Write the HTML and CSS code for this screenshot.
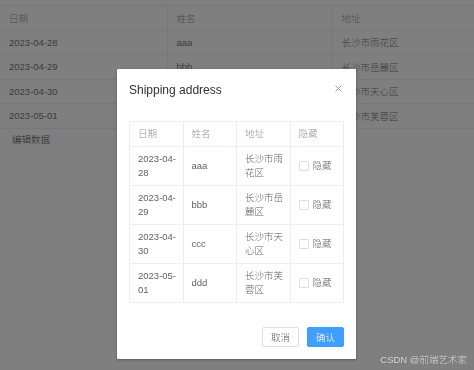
FILE: index.html
```html
<!DOCTYPE html>
<html lang="zh">
<head>
    <meta charset="UTF-8">
    <title>Shipping address</title>
    <link rel="stylesheet" href="styles.css">
</head>
<body>
    <div class="page">
        <table class="list">
            <colgroup>
                <col style="width: 167px">
                <col style="width: 165px">
                <col>
            </colgroup>
            <thead>
                <tr><th>日期</th><th>姓名</th><th>地址</th></tr>
            </thead>
            <tbody>
                <tr><td>2023-04-28</td><td>aaa</td><td>长沙市雨花区</td></tr>
                <tr><td>2023-04-29</td><td>bbb</td><td>长沙市岳麓区</td></tr>
                <tr><td>2023-04-30</td><td>ccc</td><td>长沙市天心区</td></tr>
                <tr><td>2023-05-01</td><td>ddd</td><td>长沙市芙蓉区</td></tr>
            </tbody>
        </table>
        <div class="edit-row">
            <span class="edit-btn">编辑数据</span>
        </div>
    </div>

    <div class="mask">
        <div class="dialog">
            <div class="dialog-header">
                <span class="dialog-title">Shipping address</span>
                <span class="dialog-close">
                    <svg width="7" height="7" viewBox="0 0 7 7">
                        <path d="M0.5 0.5 L6.5 6.5 M6.5 0.5 L0.5 6.5" stroke="#909399" stroke-width="0.9" fill="none"/>
                    </svg>
                </span>
            </div>
            <div class="dialog-body">
                <table class="grid">
                    <thead>
                        <tr><th>日期</th><th>姓名</th><th>地址</th><th>隐藏</th></tr>
                    </thead>
                    <tbody>
                        <tr>
                            <td>2023-04-<br>28</td><td>aaa</td><td>长沙市雨<br>花区</td>
                            <td><label class="check"><span class="box"></span>隐藏</label></td>
                        </tr>
                        <tr>
                            <td>2023-04-<br>29</td><td>bbb</td><td>长沙市岳<br>麓区</td>
                            <td><label class="check"><span class="box"></span>隐藏</label></td>
                        </tr>
                        <tr>
                            <td>2023-04-<br>30</td><td>ccc</td><td>长沙市天<br>心区</td>
                            <td><label class="check"><span class="box"></span>隐藏</label></td>
                        </tr>
                        <tr>
                            <td>2023-05-<br>01</td><td>ddd</td><td>长沙市芙<br>蓉区</td>
                            <td><label class="check"><span class="box"></span>隐藏</label></td>
                        </tr>
                    </tbody>
                </table>
            </div>
            <div class="dialog-footer">
                <button class="btn">取消</button>
                <button class="btn btn-primary">确认</button>
            </div>
        </div>
        <div class="watermark">CSDN @前端艺术家</div>
    </div>
</body>
</html>
```

FILE: styles.css
```css
body {
    margin: 0;
    font-family: "Liberation Sans", "Noto Sans CJK SC", sans-serif;
    font-size: 9.5px;
    font-weight: 300;
    color: #606266;
    background: #fff;
    width: 474px;
    height: 370px;
    overflow: hidden;
}

.page {
    padding-top: 5px;
}

.list {
    width: 100%;
    table-layout: fixed;
    border-collapse: collapse;
}

.list th,
.list td {
    height: 24.5px;
    padding: 0 0 0 9px;
    text-align: left;
    border-top: 1px solid #ebeef5;
    border-bottom: 1px solid #ebeef5;
    box-sizing: border-box;
    font-weight: 300;
}

.list td {
    color: #76787c;
}

.list th {
    color: #909399;
}

.list th + th,
.list td + td {
    border-left: 1px solid #ebeef5;
}

.edit-row {
    padding: 3px 0 0 12px;
}

.edit-btn {
    color: #505256;
}

.mask {
    position: fixed;
    inset: 0;
    background: rgba(0, 0, 0, 0.5);
}

.dialog {
    position: absolute;
    left: 117px;
    top: 69px;
    width: 239px;
    background: #fff;
    border-radius: 1px;
    box-shadow: 0 1px 3px rgba(0, 0, 0, 0.3);
}

.dialog-header {
    position: relative;
    padding: 13px 12px 0;
    height: 15px;
}

.dialog-title {
    font-size: 12px;
    line-height: 16px;
    color: #303133;
}

.dialog-close {
    position: absolute;
    top: 16px;
    right: 14px;
    line-height: 0;
}

.dialog-body {
    padding: 24px 12px 0;
}

.grid {
    width: 215px;
    table-layout: fixed;
    border-collapse: collapse;
    border: 1px solid #ebeef5;
}

.grid th,
.grid td {
    border: 1px solid #ebeef5;
    padding: 0 0 0 8px;
    text-align: left;
    font-weight: 300;
    line-height: 14px;
}

.grid th {
    height: 24px;
    color: #909399;
}

.grid td {
    height: 39px;
    box-sizing: border-box;
}

.check {
    display: flex;
    align-items: center;
    gap: 4px;
    color: #606266;
}

.box {
    width: 8px;
    height: 8px;
    border: 1px solid #dcdfe6;
    border-radius: 1px;
    background: #fff;
}

.dialog-footer {
    display: flex;
    justify-content: flex-end;
    gap: 8px;
    padding: 24px 12px 12px;
}

.btn {
    width: 37px;
    height: 20px;
    padding: 0;
    border: 1px solid #dcdfe6;
    border-radius: 2px;
    background: #fff;
    color: #606266;
    font-family: inherit;
    font-size: 9.5px;
    font-weight: 300;
}

.btn-primary {
    background: #409eff;
    border-color: #409eff;
    color: #fff;
}

.watermark {
    position: absolute;
    right: 7px;
    bottom: 4px;
    font-size: 9.5px;
    color: rgba(255, 255, 255, 0.75);
    text-shadow: 0 0 1px rgba(0, 0, 0, 0.3);
}
```
